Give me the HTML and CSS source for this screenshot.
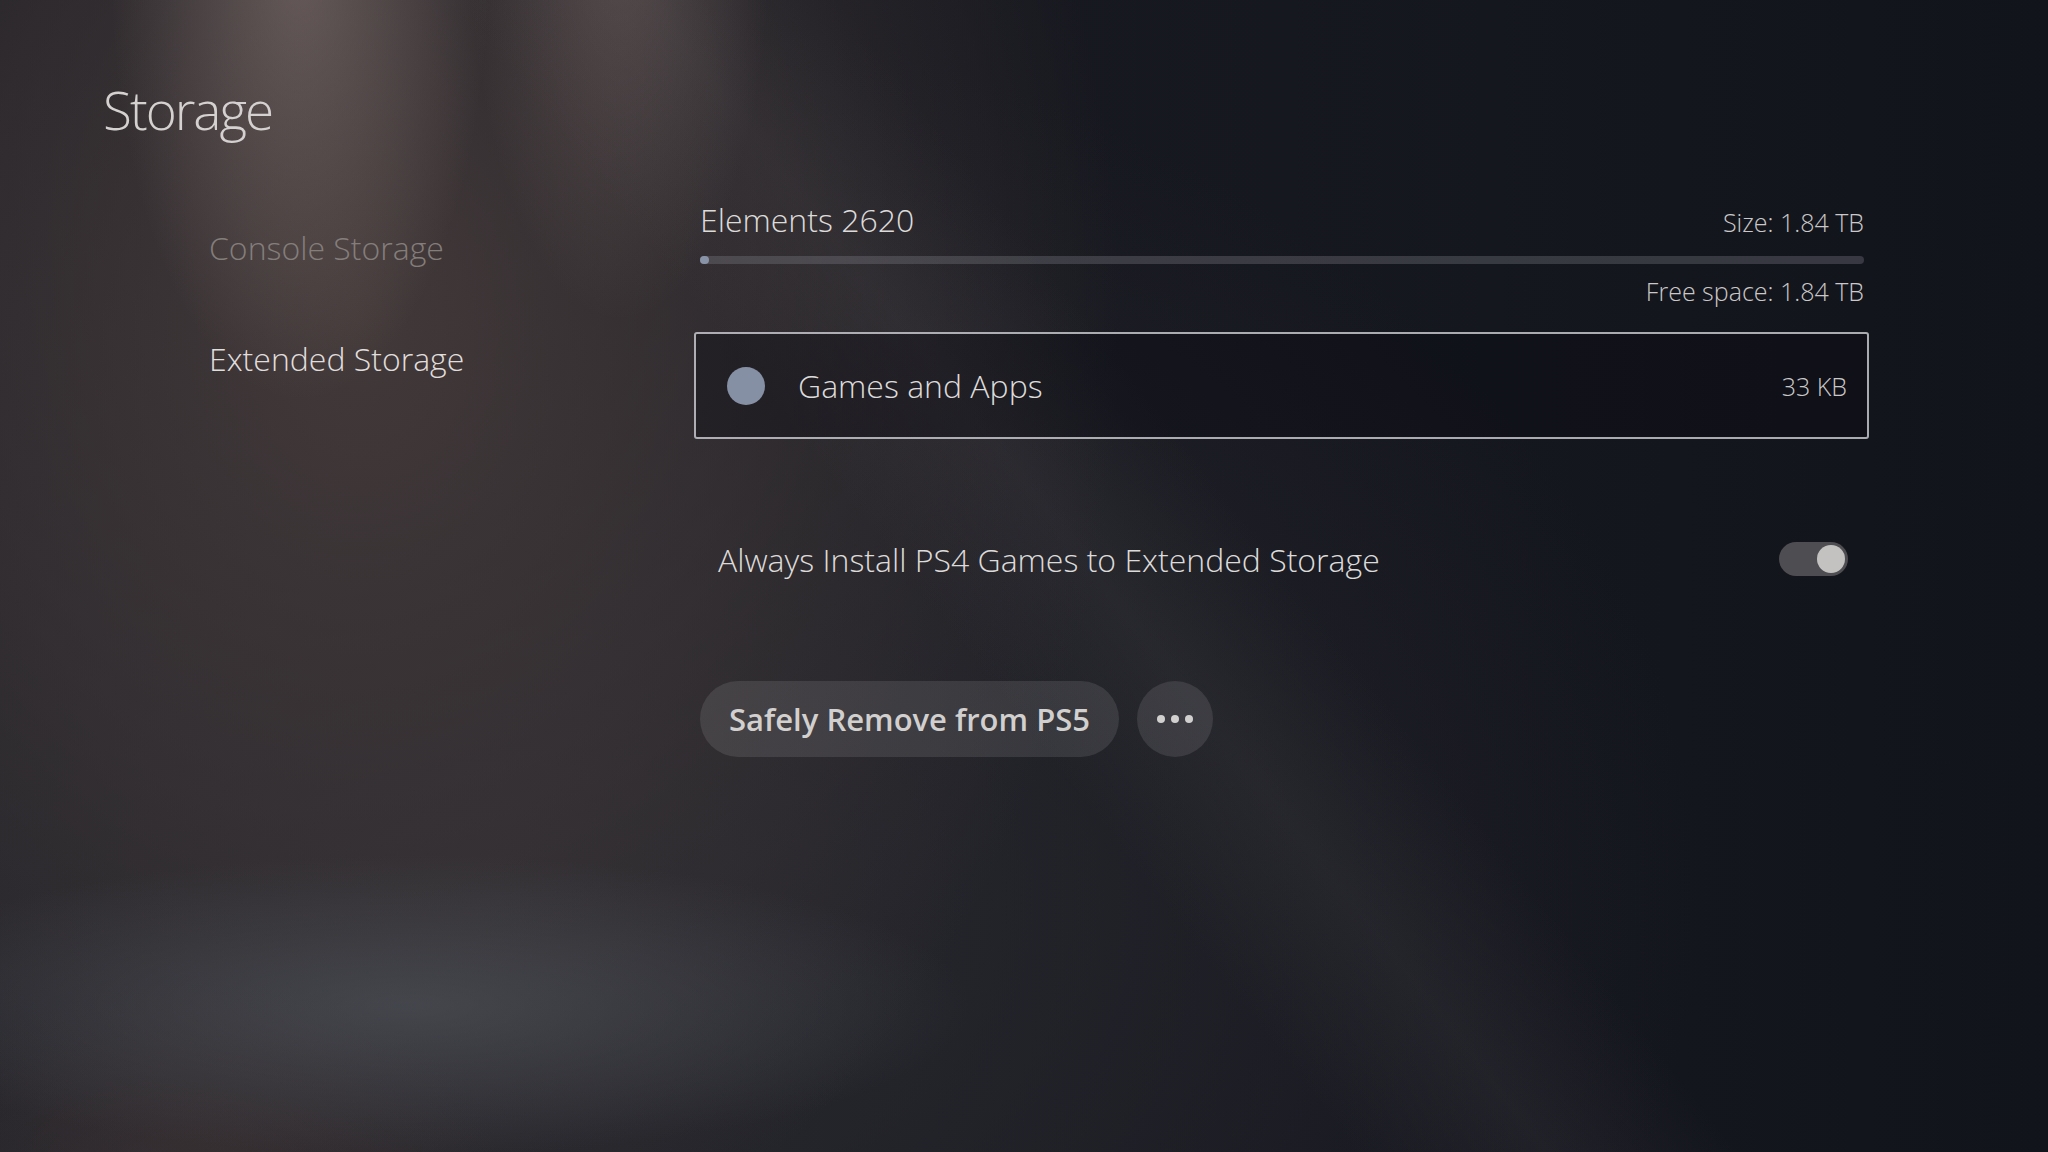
FILE: index.html
```html
<!DOCTYPE html>
<html lang="en">
<head>
    <meta charset="UTF-8">
    <meta name="viewport" content="width=device-width, initial-scale=1.0">
    <title>Storage</title>
    <link rel="stylesheet" href="styles.css">
</head>
<body>
    <div class="screen">
        <h1 class="page-title">Storage</h1>

        <div class="layout">
            <!-- Side menu -->
            <nav class="side-menu">
                <a href="#" class="menu-item dim">Console Storage</a>
                <a href="#" class="menu-item">Extended Storage</a>
            </nav>

            <!-- Drive details -->
            <main class="drive">
                <div class="drive-head">
                    <span class="drive-name">Elements 2620</span>
                    <span class="drive-meta">Size: 1.84 TB</span>
                </div>
                <div class="usage-bar">
                    <div class="usage-fill" style="width: 9px;"></div>
                </div>
                <div class="free-space">Free space: 1.84 TB</div>

                <div class="usage-row">
                    <span class="usage-dot"></span>
                    <span class="usage-label">Games and Apps</span>
                    <span class="usage-size">33 KB</span>
                </div>

                <div class="setting-row">
                    <span class="setting-label">Always Install PS4 Games to Extended Storage</span>
                    <span class="toggle"><span class="knob"></span></span>
                </div>

                <div class="actions">
                    <button class="btn-pill">Safely Remove from PS5</button>
                    <button class="btn-more"><span></span><span></span><span></span></button>
                </div>
            </main>
        </div>
    </div>
</body>
</html>
```

FILE: styles.css
```css
* {
    margin: 0;
    padding: 0;
    box-sizing: border-box;
}

body {
    width: 2048px;
    height: 1152px;
    overflow: hidden;
    font-family: 'Open Sans', 'Noto Sans', sans-serif;
    font-weight: 300;
    color: #dddbda;
    background-color: #12141c;
    background-image:
        radial-gradient(ellipse 190px 440px at 300px -40px, rgba(170, 150, 145, 0.42), transparent),
        radial-gradient(ellipse 150px 380px at 620px -60px, rgba(150, 130, 125, 0.32), transparent),
        linear-gradient(52deg, transparent 46%, rgba(120, 112, 115, 0.10) 52.5%, transparent 59%),
        radial-gradient(ellipse 560px 150px at 410px 1005px, rgba(84, 90, 98, 0.55), transparent),
        radial-gradient(ellipse 300px 200px at 200px 1180px, rgba(70, 55, 55, 0.5), transparent),
        radial-gradient(ellipse 760px 1000px at 360px 320px, rgba(68, 58, 58, 0.95), transparent),
        radial-gradient(ellipse 1200px 900px at 500px 900px, rgba(44, 44, 50, 0.9), transparent),
        linear-gradient(90deg, #1d1e24 0, #12141c 100%);
}

.screen {
    padding: 82px 0 0 103px;
}

.page-title {
    font-size: 53px;
    line-height: 56px;
    font-weight: 300;
    letter-spacing: -2px;
    color: #d4d1d0;
}

.layout {
    display: flex;
}

/* Side menu */
.side-menu {
    width: 597px;
    padding: 94px 0 0 106px;
    display: flex;
    flex-direction: column;
    gap: 79px;
}

.menu-item {
    font-size: 32px;
    line-height: 32px;
    color: #e0dedd;
    text-decoration: none;
}

.menu-item.dim {
    color: #847e7b;
}

/* Drive */
.drive {
    width: 1164px;
    padding-top: 66px;
}

.drive-head {
    display: flex;
    justify-content: space-between;
    align-items: baseline;
}

.drive-name {
    font-size: 32px;
    line-height: 32px;
}

.drive-meta,
.free-space,
.usage-size {
    font-size: 25px;
    line-height: 26px;
    color: #cac8c8;
}

.usage-bar {
    margin-top: 20px;
    height: 8px;
    border-radius: 4px;
    background-color: rgba(140, 140, 150, 0.3);
}

.usage-fill {
    height: 8px;
    border-radius: 4px;
    background-color: #8893a8;
}

.free-space {
    margin-top: 14px;
    text-align: right;
}

.usage-row {
    margin: 28px -5px 0 -6px;
    height: 107px;
    border: 2px solid rgba(210, 210, 216, 0.8);
    border-radius: 3px;
    background-color: rgba(8, 10, 18, 0.35);
    display: flex;
    align-items: center;
    padding: 0 20px 0 31px;
}

.usage-dot {
    width: 38px;
    height: 38px;
    border-radius: 50%;
    background-color: #8590a5;
}

.usage-label {
    margin-left: 33px;
    font-size: 32px;
    flex: 1;
}

/* Setting */
.setting-row {
    margin-top: 103px;
    height: 34px;
    display: flex;
    justify-content: space-between;
    align-items: center;
    padding: 0 16px 0 18px;
}

.setting-label {
    font-size: 32px;
    line-height: 32px;
    padding-top: 2px;
}

.toggle {
    width: 69px;
    height: 34px;
    border-radius: 17px;
    background-color: #4e4d51;
    display: flex;
    justify-content: flex-end;
    align-items: center;
    padding-right: 3px;
}

.knob {
    width: 28px;
    height: 28px;
    border-radius: 50%;
    background-color: #c4c2c1;
}

/* Buttons */
.actions {
    margin-top: 105px;
    display: flex;
    gap: 18px;
}

.btn-pill,
.btn-more {
    height: 76px;
    border: none;
    border-radius: 38px;
    background-color: rgba(255, 255, 255, 0.1);
    color: #d2d0cf;
    font-family: 'Open Sans', 'Noto Sans', sans-serif;
}

.btn-pill {
    padding: 0 29px;
    font-size: 31px;
    font-weight: 600;
}

.btn-more {
    width: 76px;
    display: flex;
    justify-content: center;
    align-items: center;
    gap: 6px;
}

.btn-more span {
    width: 8px;
    height: 8px;
    border-radius: 50%;
    background-color: #d2d0cf;
}
```
